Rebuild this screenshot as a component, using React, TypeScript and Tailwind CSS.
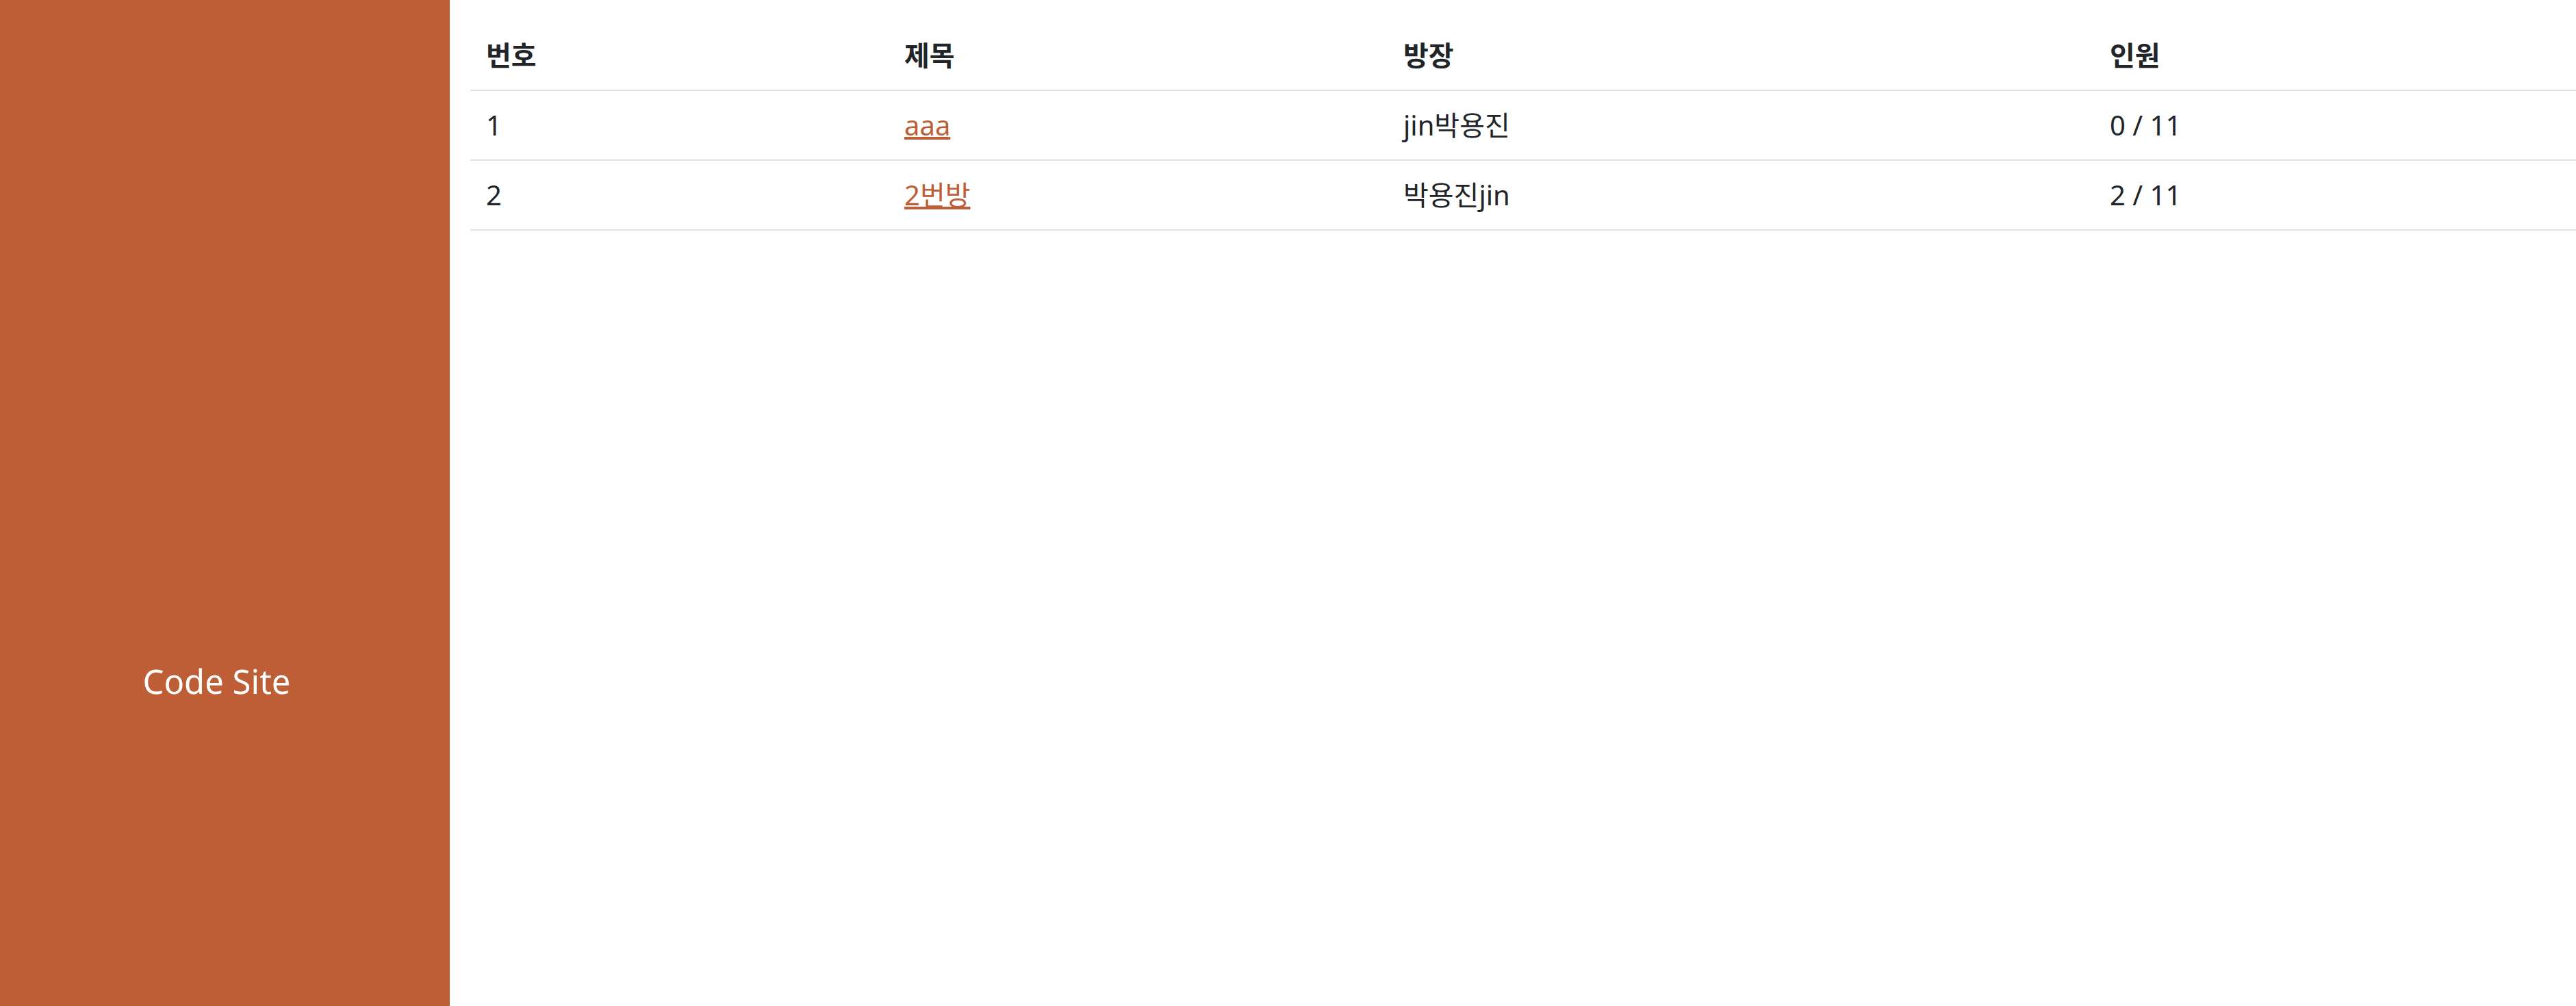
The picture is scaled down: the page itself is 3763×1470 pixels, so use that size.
const rooms = [
  { id: 1, title: "aaa", owner: "jin박용진", members: "0 / 11" },
  { id: 2, title: "2번방", owner: "박용진jin", members: "2 / 11" },
];

export default function App() {
  return (
    <div
      className="flex h-screen w-full bg-white text-[#212529]"
      style={{ fontFamily: '"Noto Sans", "Noto Sans CJK KR", sans-serif' }}
    >
      {/* Sidebar */}
      <aside className="w-[657px] shrink-0 bg-[#bd5e37] flex flex-col items-center justify-center pt-[520px] pr-[24px]">
        <span className="text-white text-[49px] leading-none">Code Site</span>
      </aside>

      {/* Main Content */}
      <main className="flex-1 pl-[30px] pt-[30px]">
        <table className="w-full border-collapse text-left text-[40px]">
          <thead>
            <tr className="h-[102px] border-b-2 border-[#dee2e6]">
              <th className="w-[611px] px-[23px] font-bold">번호</th>
              <th className="w-[729px] px-[23px] font-bold">제목</th>
              <th className="w-[1032px] px-[23px] font-bold">방장</th>
              <th className="px-[23px] font-bold">인원</th>
            </tr>
          </thead>
          <tbody>
            {rooms.map((r) => (
              <tr key={r.id} className="h-[102px] border-b-2 border-[#dee2e6]">
                <td className="px-[23px]">{r.id}</td>
                <td className="px-[23px]">
                  <a href="#" className="text-[#bd5e37] underline">
                    {r.title}
                  </a>
                </td>
                <td className="px-[23px]">{r.owner}</td>
                <td className="px-[23px]">{r.members}</td>
              </tr>
            ))}
          </tbody>
        </table>
      </main>
    </div>
  );
}
